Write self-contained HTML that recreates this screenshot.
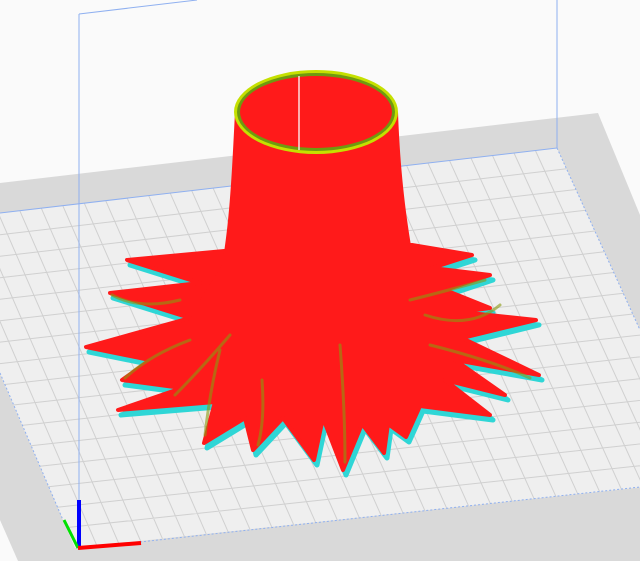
<!DOCTYPE html>
<html><head><meta charset="utf-8"><style>
html,body{margin:0;padding:0;background:#fafafa;width:640px;height:561px;overflow:hidden}
svg{display:block}
</style></head><body>
<svg width="640" height="561" viewBox="0 0 640 561" xmlns="http://www.w3.org/2000/svg">
<rect width="640" height="561" fill="#fafafa"/>
<polygon points="0,183 598,113 640,215 640,561 18,561 0,520" fill="#d9d9d9"/>
<polygon points="-66,221 557,148 709,480 75,548" fill="#efefef"/>
<path stroke="#d0d0d0" stroke-width="1" fill="none" d="
M-44.5,218.5L96.9,545.7 M-23,216L118.7,543.3 M-1.6,213.4L140.6,541 M19.9,210.9L162.4,538.6 M41.4,208.4L184.3,536.3 M62.9,205.9L206.2,533.9 M84.4,203.4L228,531.6 M105.8,200.9L249.9,529.2 M127.3,198.3L271.7,526.9 M148.8,195.8L293.6,524.6 M170.3,193.3L315.5,522.2 M191.8,190.8L337.3,519.9 M213.2,188.3L359.2,517.5 M234.7,185.8L381,515.2 M256.2,183.2L402.9,512.8 M277.7,180.7L424.8,510.5 M299.2,178.2L446.6,508.1 M320.6,175.7L468.5,505.8 M342.1,173.2L490.3,503.4 M363.6,170.7L512.2,501.1 M385.1,168.1L534.1,498.8 M406.6,165.6L555.9,496.4 M428,163.1L577.8,494.1 M449.5,160.6L599.6,491.7 M471,158.1L621.5,489.4 M492.5,155.6L643.4,487 M514,153L665.2,484.7 M535.4,150.5L687.1,482.3
M-57.2,241.4L566.5,168.8 M-48.4,261.9L576,189.5 M-39.6,282.3L585.5,210.3 M-30.8,302.8L595,231 M-21.9,323.2L604.5,251.8 M-13.1,343.6L614,272.5 M-4.3,364.1L623.5,293.3 M4.5,384.5L633,314 M13.3,405L642.5,334.8 M22.1,425.4L652,355.5 M30.9,445.8L661.5,376.3 M39.7,466.3L671,397 M48.5,486.7L680.5,417.8 M57.3,507.2L690,438.5 M66.2,527.6L699.5,459.3"/>
<line x1="0" y1="213" x2="557" y2="148" stroke="#8fb0f0" stroke-width="1"/>
<line x1="557" y1="148" x2="640" y2="330" stroke="#8fb0f0" stroke-width="1" stroke-dasharray="2,2"/>
<line x1="140" y1="542" x2="640" y2="487" stroke="#8fb0f0" stroke-width="1" stroke-dasharray="2,2"/>
<line x1="0" y1="373" x2="63" y2="520" stroke="#8fb0f0" stroke-width="1" stroke-dasharray="2,2"/>
<line x1="79" y1="14" x2="79" y2="548" stroke="#8fb0f0" stroke-width="1"/>
<line x1="79" y1="14" x2="197" y2="0" stroke="#8fb0f0" stroke-width="1"/>
<line x1="557" y1="0" x2="557" y2="148" stroke="#8fb0f0" stroke-width="1"/>

<g transform="translate(3,5)">
<path d="M235,250 L127,260 L200,283 L110,293 L190,318 L86,347 L150,360 L122,380 L182,388 L118,410 L215,402 L204,443 L245,418 L253,450 L283,418 L314,460 L323,418 L343,470 L362,424 L384,453 L388,424 L406,437 L420,406 L490,415 L445,380 L505,395 L455,360 L539,375 L462,338 L536,320 L460,312 L490,308 L445,290 L490,275 L432,268 L472,255 L412,245 Z" fill="#2fd6d6" stroke="#2fd6d6" stroke-width="5" stroke-linejoin="round"/>
</g>
<path d="M235,250 L127,260 L200,283 L110,293 L190,318 L86,347 L150,360 L122,380 L182,388 L118,410 L215,402 L204,443 L245,418 L253,450 L283,418 L314,460 L323,418 L343,470 L362,424 L384,453 L388,424 L406,437 L420,406 L490,415 L445,380 L505,395 L455,360 L539,375 L462,338 L536,320 L460,312 L490,308 L445,290 L490,275 L432,268 L472,255 L412,245 Z" fill="#ff1a1a" stroke="#ff1a1a" stroke-width="4" stroke-linejoin="round"/>
<path d="M235,112 C232,170 230,220 222,265 L200,300 L430,300 L414,262 C406,220 400,170 398,112 Z" fill="#ff1a1a"/>
<g stroke="#8a9a10" stroke-width="3" fill="none" opacity="0.6" stroke-linecap="round">
<path d="M220,350 Q210,390 205,435"/>
<path d="M262,380 Q265,420 258,445"/>
<path d="M340,345 Q345,410 345,462"/>
<path d="M425,315 Q470,330 500,305"/>
<path d="M430,345 Q490,360 530,378"/>
<path d="M410,300 Q450,290 485,280"/>
<path d="M180,300 Q140,310 112,295"/>
<path d="M190,340 Q150,355 125,378"/>
<path d="M230,335 Q200,370 175,395"/>
</g>
<ellipse cx="316" cy="112" rx="82" ry="42" fill="#c5e000"/>
<ellipse cx="316" cy="112" rx="79" ry="39" fill="#6f9a10"/>
<ellipse cx="316" cy="112" rx="76" ry="36" fill="#ff1a1a"/>
<line x1="299" y1="76" x2="299" y2="150" stroke="#ffffff" stroke-width="1.3"/>
<line x1="79" y1="500" x2="79" y2="548" stroke="#0000ff" stroke-width="4"/>
<line x1="64" y1="520" x2="78" y2="548" stroke="#00e000" stroke-width="3"/>
<line x1="78" y1="548" x2="141" y2="543" stroke="#ff0000" stroke-width="4"/>
</svg>
</body></html>
